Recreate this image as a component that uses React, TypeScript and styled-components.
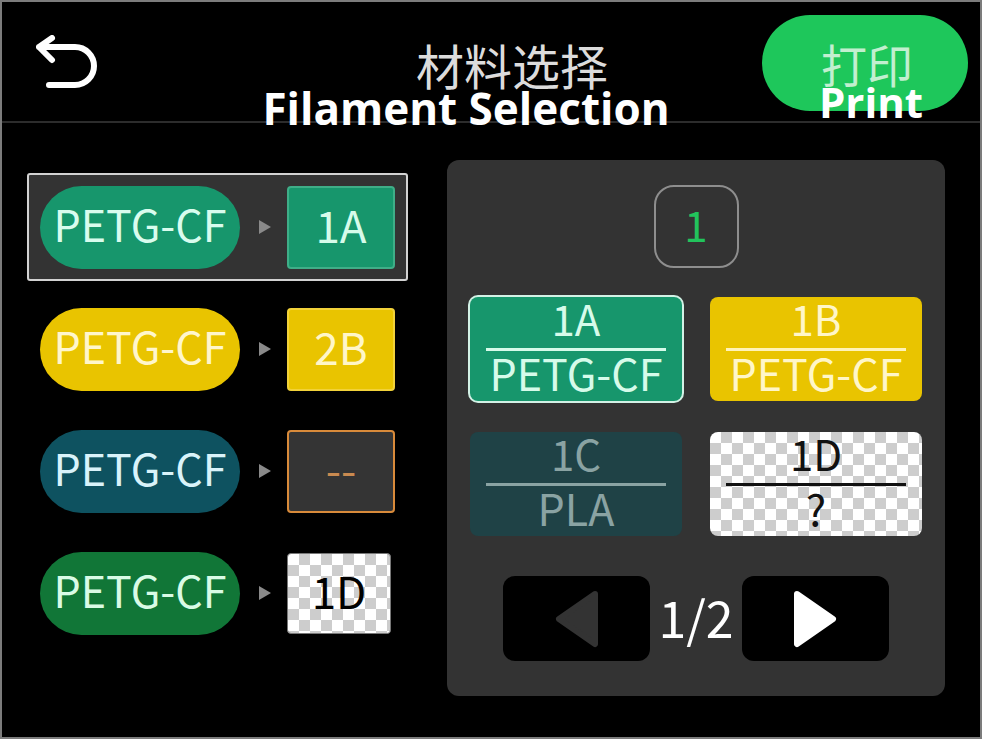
import React from "react";
import styled, { createGlobalStyle, css } from "styled-components";

const GlobalStyle = createGlobalStyle`
  html, body { margin: 0; padding: 0; background: #000; }
  * { box-sizing: border-box; }
`;

const CJK = `"Noto Sans CJK SC", "Noto Sans", sans-serif`;
const EN = `"Open Sans", "Noto Sans", sans-serif`;

const Frame = styled.div`
  width: 982px;
  height: 739px;
  border: 2px solid #7c7c7c;
  background: #000;
  display: flex;
  flex-direction: column;
  font-family: ${CJK};
  overflow: hidden;
`;

const Header = styled.header`
  flex: none;
  height: 121px;
  border-bottom: 2px solid #2c2c2c;
  display: grid;
  grid-template-columns: 1fr auto 1fr;
  align-items: start;
`;

const BackButton = styled.div`
  justify-self: start;
  margin: 33px 0 0 34px;
  width: 62px;
  height: 54px;
`;

const TitleStack = styled.div`
  display: flex;
  flex-direction: column;
  align-items: center;
  padding-top: 38px;
`;

const TitleCn = styled.div`
  margin-left: 42px;
  font-size: 48px;
  line-height: 48px;
  color: #dcdcdc;
  white-space: nowrap;
`;

const TitleEn = styled.div`
  margin-right: 50px;
  margin-top: 3px;
  font-family: ${EN};
  font-weight: 700;
  font-size: 44px;
  line-height: 34px;
  color: #fff;
  white-space: nowrap;
`;

const PrintButton = styled.div`
  justify-self: end;
  margin: 13px 12px 0 0;
  width: 206px;
  height: 96px;
  border-radius: 48px;
  background: #1ec75b;
  display: flex;
  flex-direction: column;
  align-items: center;
  padding-top: 25px;
`;

const PrintCn = styled.div`
  font-size: 46px;
  line-height: 46px;
  color: #c2efcf;
  margin-left: 4px;
`;

const PrintEn = styled.div`
  font-family: ${EN};
  font-weight: 700;
  font-size: 42px;
  line-height: 34px;
  color: #fff;
  margin-left: 12px;
  margin-top: -1px;
`;

const Main = styled.main`
  display: flex;
  align-items: flex-start;
  padding: 37px 0 0 25px;
  gap: 39px;
`;

const List = styled.div`
  width: 381px;
  margin-top: 13px;
  display: flex;
  flex-direction: column;
  gap: 14px;
`;

const Row = styled.div<{ $selected?: boolean }>`
  height: 108px;
  display: flex;
  align-items: center;
  padding: 0 11px;
  border: 2px solid ${(p) => (p.$selected ? "#d2d2d2" : "transparent")};
  background: ${(p) => (p.$selected ? "#333" : "transparent")};
  border-radius: 3px;
`;

const Pill = styled.div<{ $bg: string; $fg: string }>`
  width: 200px;
  height: 83px;
  border-radius: 42px;
  background: ${(p) => p.$bg};
  color: ${(p) => p.$fg};
  font-size: 43px;
  line-height: 1;
  display: flex;
  align-items: center;
  justify-content: center;
  padding-bottom: 7px;
`;

const Arrow = styled.svg`
  flex: none;
  width: 14px;
  height: 16px;
  margin-left: 18px;
`;

const checker = css`
  background-color: #fff;
  background-image: linear-gradient(45deg, #cdcdcd 25%, transparent 25%, transparent 75%, #cdcdcd 75%),
    linear-gradient(45deg, #cdcdcd 25%, transparent 25%, transparent 75%, #cdcdcd 75%);
  background-size: 22px 22px;
  background-position: 0 0, 11px 11px;
`;

type Slot = "green" | "yellow" | "empty" | "clear";

const slotStyles: Record<Slot, ReturnType<typeof css>> = {
  green: css`
    background: #17966c;
    border: 2px solid #3fae88;
    color: #d6fbea;
  `,
  yellow: css`
    background: #e9c400;
    border: 2px solid #f2d23a;
    color: #fff6c8;
  `,
  empty: css`
    background: #343434;
    border: 2px solid #d88a3a;
    color: #c98a50;
  `,
  clear: css`
    ${checker};
    border: 1px solid #777;
    color: #000;
    width: 104px;
    height: 81px;
  `,
};

const SlotBox = styled.div<{ $kind: Slot }>`
  flex: none;
  width: 108px;
  height: 83px;
  margin-left: 15px;
  border-radius: 4px;
  font-size: 44px;
  line-height: 1;
  display: flex;
  align-items: center;
  justify-content: center;
  padding-bottom: 7px;
  ${(p) => slotStyles[p.$kind]};
`;

const Panel = styled.section`
  width: 498px;
  height: 536px;
  background: #333;
  border-radius: 12px;
  display: flex;
  flex-direction: column;
  align-items: center;
  padding-top: 25px;
`;

const TrayBadge = styled.div`
  width: 85px;
  height: 83px;
  border: 2px solid #8e8e8e;
  border-radius: 20px;
  color: #22c35c;
  font-size: 42px;
  line-height: 1;
  display: flex;
  align-items: center;
  justify-content: center;
  padding-bottom: 6px;
`;

const CardGrid = styled.div`
  margin-top: 29px;
  display: grid;
  grid-template-columns: 212px 212px;
  grid-auto-rows: 104px;
  column-gap: 28px;
  row-gap: 31px;
`;

type CardKind = "green" | "yellow" | "teal" | "clear";

const cardStyles: Record<CardKind, ReturnType<typeof css>> = {
  green: css`
    background: #17966c;
    color: #d6fbea;
    --rule: #d6fbea;
  `,
  yellow: css`
    background: #e9c400;
    color: #fff6c8;
    --rule: #fff3b8;
  `,
  teal: css`
    background: #1f4246;
    color: #8aa3a3;
    --rule: #8aa3a3;
  `,
  clear: css`
    ${checker};
    color: #111;
    --rule: #111;
  `,
};

const Card = styled.div<{ $kind: CardKind; $selected?: boolean }>`
  border-radius: 8px;
  display: flex;
  flex-direction: column;
  align-items: center;
  ${(p) => cardStyles[p.$kind]};
  ${(p) =>
    p.$selected &&
    css`
      box-shadow: 0 0 0 2px #d3f2e6;
    `}
`;

const CardTop = styled.div`
  flex: none;
  height: 50px;
  font-size: 42px;
  line-height: 1;
  display: flex;
  align-items: center;
  padding-bottom: 8px;
`;

const CardRule = styled.div`
  flex: none;
  width: 180px;
  height: 3px;
  background: var(--rule);
  margin-top: 1px;
`;

const CardBottom = styled.div`
  flex: 1;
  min-height: 0;
  font-size: 43px;
  line-height: 1;
  display: flex;
  align-items: center;
  padding-bottom: 7px;
`;

const Nav = styled.div`
  margin-top: 40px;
  display: flex;
  align-items: center;
  gap: 8px;
`;

const NavButton = styled.div`
  width: 147px;
  height: 85px;
  background: #000;
  border-radius: 12px;
  display: flex;
  align-items: center;
  justify-content: center;
`;

const PageLabel = styled.div`
  color: #fff;
  font-size: 50px;
  line-height: 1;
  padding-bottom: 6px;
`;

const rows: { name: string; bg: string; fg: string; slot: Slot; label: string; selected?: boolean }[] = [
  { name: "PETG-CF", bg: "#17966c", fg: "#d9fcee", slot: "green", label: "1A", selected: true },
  { name: "PETG-CF", bg: "#e9c400", fg: "#fff6cc", slot: "yellow", label: "2B" },
  { name: "PETG-CF", bg: "#0e5260", fg: "#d9f3fa", slot: "empty", label: "--" },
  { name: "PETG-CF", bg: "#117637", fg: "#d9fbe6", slot: "clear", label: "1D" },
];

const cards: { top: string; bottom: string; kind: CardKind; selected?: boolean }[] = [
  { top: "1A", bottom: "PETG-CF", kind: "green", selected: true },
  { top: "1B", bottom: "PETG-CF", kind: "yellow" },
  { top: "1C", bottom: "PLA", kind: "teal" },
  { top: "1D", bottom: "?", kind: "clear" },
];

export default function App() {
  return (
    <>
      <GlobalStyle />
      <Frame>
        <Header>
          <BackButton>
            <svg width="62" height="54" viewBox="0 0 62 54" fill="none">
              <path
                d="M16 3 L3 12 L16 25 M3 12 H39 A19 19 0 0 1 39 50 H13"
                stroke="#fff"
                strokeWidth="6"
                strokeLinecap="round"
                strokeLinejoin="round"
              />
            </svg>
          </BackButton>
          <TitleStack>
            <TitleCn>材料选择</TitleCn>
            <TitleEn>Filament Selection</TitleEn>
          </TitleStack>
          <PrintButton>
            <PrintCn>打印</PrintCn>
            <PrintEn>Print</PrintEn>
          </PrintButton>
        </Header>
        <Main>
          <List>
            {rows.map((r, i) => (
              <Row key={i} $selected={r.selected}>
                <Pill $bg={r.bg} $fg={r.fg}>
                  {r.name}
                </Pill>
                <Arrow viewBox="0 0 14 16">
                  <polygon points="1,1 13,8 1,15" fill="#8a8a8a" />
                </Arrow>
                <SlotBox $kind={r.slot}>{r.label}</SlotBox>
              </Row>
            ))}
          </List>
          <Panel>
            <TrayBadge>1</TrayBadge>
            <CardGrid>
              {cards.map((c, i) => (
                <Card key={i} $kind={c.kind} $selected={c.selected}>
                  <CardTop>{c.top}</CardTop>
                  <CardRule />
                  <CardBottom>{c.bottom}</CardBottom>
                </Card>
              ))}
            </CardGrid>
            <Nav>
              <NavButton>
                <svg width="48" height="58" viewBox="0 0 48 58">
                  <polygon points="42,4 6,29 42,54" fill="#333" stroke="#333" strokeWidth="6" strokeLinejoin="round" />
                </svg>
              </NavButton>
              <PageLabel>1/2</PageLabel>
              <NavButton>
                <svg width="48" height="58" viewBox="0 0 48 58">
                  <polygon points="6,4 42,29 6,54" fill="#fff" stroke="#fff" strokeWidth="6" strokeLinejoin="round" />
                </svg>
              </NavButton>
            </Nav>
          </Panel>
        </Main>
      </Frame>
    </>
  );
}
